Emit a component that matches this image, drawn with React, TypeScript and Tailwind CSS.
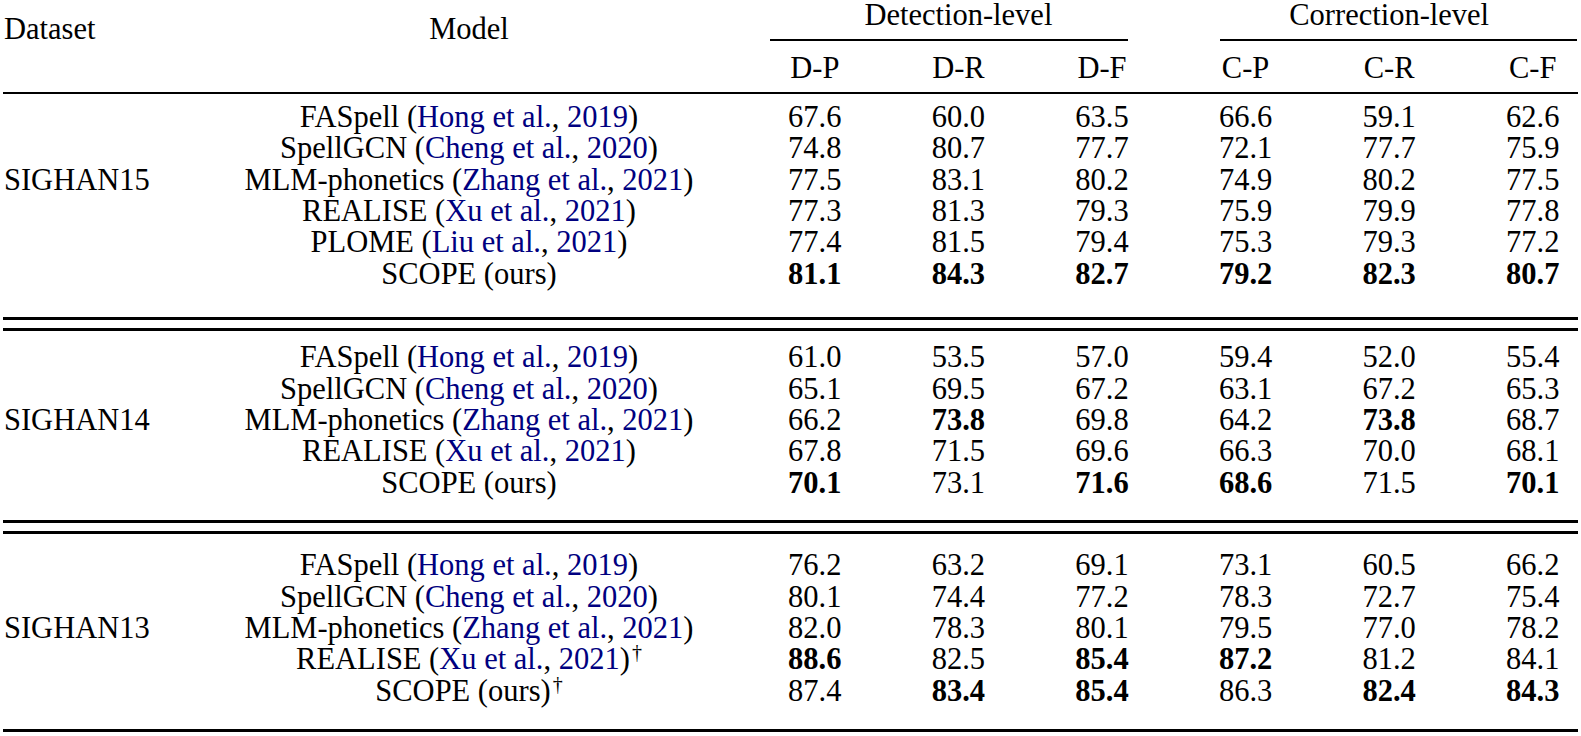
type Row = {
  model: string;
  cite?: [string, string];
  dagger?: boolean;
  values: string[];
};

type Section = { name: string; rows: Row[] };

const sections: Section[] = [
  {
    name: "SIGHAN15",
    rows: [
      { model: "FASpell", cite: ["Hong et al.", "2019"], values: ["67.6", "60.0", "63.5", "66.6", "59.1", "62.6"] },
      { model: "SpellGCN", cite: ["Cheng et al.", "2020"], values: ["74.8", "80.7", "77.7", "72.1", "77.7", "75.9"] },
      { model: "MLM-phonetics", cite: ["Zhang et al.", "2021"], values: ["77.5", "83.1", "80.2", "74.9", "80.2", "77.5"] },
      { model: "REALISE", cite: ["Xu et al.", "2021"], values: ["77.3", "81.3", "79.3", "75.9", "79.9", "77.8"] },
      { model: "PLOME", cite: ["Liu et al.", "2021"], values: ["77.4", "81.5", "79.4", "75.3", "79.3", "77.2"] },
      { model: "SCOPE (ours)", values: ["*81.1", "*84.3", "*82.7", "*79.2", "*82.3", "*80.7"] },
    ],
  },
  {
    name: "SIGHAN14",
    rows: [
      { model: "FASpell", cite: ["Hong et al.", "2019"], values: ["61.0", "53.5", "57.0", "59.4", "52.0", "55.4"] },
      { model: "SpellGCN", cite: ["Cheng et al.", "2020"], values: ["65.1", "69.5", "67.2", "63.1", "67.2", "65.3"] },
      { model: "MLM-phonetics", cite: ["Zhang et al.", "2021"], values: ["66.2", "*73.8", "69.8", "64.2", "*73.8", "68.7"] },
      { model: "REALISE", cite: ["Xu et al.", "2021"], values: ["67.8", "71.5", "69.6", "66.3", "70.0", "68.1"] },
      { model: "SCOPE (ours)", values: ["*70.1", "73.1", "*71.6", "*68.6", "71.5", "*70.1"] },
    ],
  },
  {
    name: "SIGHAN13",
    rows: [
      { model: "FASpell", cite: ["Hong et al.", "2019"], values: ["76.2", "63.2", "69.1", "73.1", "60.5", "66.2"] },
      { model: "SpellGCN", cite: ["Cheng et al.", "2020"], values: ["80.1", "74.4", "77.2", "78.3", "72.7", "75.4"] },
      { model: "MLM-phonetics", cite: ["Zhang et al.", "2021"], values: ["82.0", "78.3", "80.1", "79.5", "77.0", "78.2"] },
      { model: "REALISE", cite: ["Xu et al.", "2021"], dagger: true, values: ["*88.6", "82.5", "*85.4", "*87.2", "81.2", "84.1"] },
      { model: "SCOPE (ours)", dagger: true, values: ["87.4", "*83.4", "*85.4", "86.3", "*82.4", "*84.3"] },
    ],
  },
];

function ModelCell({ row }: { row: Row }) {
  return (
    <div className="pr-[10px] text-center whitespace-nowrap">
      {row.model}
      {row.cite && (
        <>
          {" ("}
          <span className="text-[#000080]">{row.cite[0]}</span>
          {", "}
          <span className="text-[#000080]">{row.cite[1]}</span>
          {")"}
        </>
      )}
      {row.dagger && <sup className="ml-[2px] text-[20px]">†</sup>}
    </div>
  );
}

function DataSection({ section, className }: { section: Section; className: string }) {
  return (
    <div className={className}>
      {section.rows.map((row, i) => (
        <div key={row.model} className="grid h-[31.4px] grid-cols-[205px_538px_repeat(6,143.6px)]">
          <div className="pl-[4px] whitespace-nowrap">{i === 2 ? section.name : ""}</div>
          <ModelCell row={row} />
          {row.values.map((v, j) =>
            v.startsWith("*") ? (
              <div key={j} className="text-center font-bold">
                {v.slice(1)}
              </div>
            ) : (
              <div key={j} className="text-center">
                {v}
              </div>
            )
          )}
        </div>
      ))}
    </div>
  );
}

function DoubleRule({ className }: { className: string }) {
  return <div className={`ml-[3px] h-[14px] w-[1575px] border-y-[3px] border-black ${className}`} />;
}

export default function App() {
  return (
    <div className="h-[736px] w-[1581px] overflow-hidden bg-white [font-family:'Liberation_Serif','Times_New_Roman',serif] text-[30.5px] leading-[31.4px] text-black">
      {/* Header */}
      <div className="grid grid-cols-[205px_538px_repeat(6,143.6px)]">
        <div className="row-span-2 pl-[4px] pt-[14px]">Dataset</div>
        <div className="row-span-2 pr-[10px] pt-[14px] text-center">Model</div>
        <div className="col-span-3">
          <div className="text-center leading-[30px]">Detection-level</div>
          <div className="mt-[9px] ml-[27px] mr-[46px] h-[1.5px] bg-black" />
        </div>
        <div className="col-span-3">
          <div className="text-center leading-[30px]">Correction-level</div>
          <div className="mt-[9px] ml-[46px] mr-[28px] h-[1.5px] bg-black" />
        </div>
        {["D-P", "D-R", "D-F", "C-P", "C-R", "C-F"].map((h) => (
          <div key={h} className="pt-[12px] text-center">
            {h}
          </div>
        ))}
      </div>
      <div className="mt-[8px] ml-[3px] h-[2px] w-[1575px] bg-black" />

      <DataSection section={sections[0]} className="mt-[8px]" />
      <DoubleRule className="mt-[27px]" />
      <DataSection section={sections[1]} className="mt-[11px]" />
      <DoubleRule className="mt-[21px]" />
      <DataSection section={sections[2]} className="mt-[16px]" />
      <div className="mt-[22px] ml-[3px] h-[3px] w-[1575px] bg-black" />
    </div>
  );
}
